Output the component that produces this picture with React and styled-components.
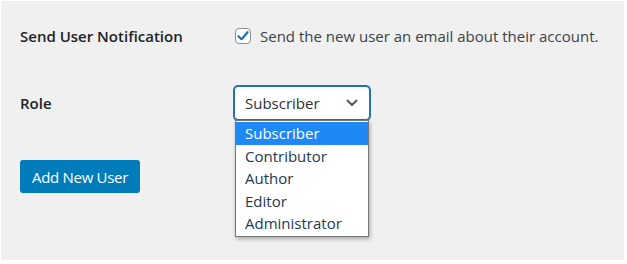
import React, { useState } from 'react';
import styled, { createGlobalStyle } from 'styled-components';

const GlobalStyle = createGlobalStyle`
  html, body {
    margin: 0;
    padding: 0;
    background: #ffffff;
  }
  body {
    font-family: "Open Sans", "Noto Sans", sans-serif;
    color: #1d2327;
  }
`;

const roles = ['Subscriber', 'Contributor', 'Author', 'Editor', 'Administrator'];

const Panel = styled.div`
  margin: 1px 0 0 1px;
  width: 623px;
  height: 259px;
  background: #f0f0f1;
  box-sizing: border-box;
  padding: 25px 0 0 19px;
`;

const FormRow = styled.div`
  display: grid;
  grid-template-columns: 214px 1fr;
  align-items: center;
  height: ${(p) => p.$height}px;
  margin-bottom: ${(p) => p.$gap || 0}px;
`;

const Label = styled.label`
  font-size: 15px;
  font-weight: 600;
  color: #1d2327;
`;

const CheckLine = styled.label`
  display: flex;
  align-items: center;
  gap: 9px;
  font-size: 15px;
  color: #3c434a;
`;

const Box = styled.span`
  width: 16px;
  height: 16px;
  box-sizing: border-box;
  border: 1px solid #8c8f94;
  border-radius: 4px;
  background: #ffffff;
  display: flex;
  align-items: center;
  justify-content: center;
  margin-left: 1px;
`;

const SelectWrap = styled.div`
  position: relative;
  width: 136px;
`;

const SelectBox = styled.div`
  height: 34px;
  box-sizing: border-box;
  border: 1px solid #2271b1;
  box-shadow: 0 0 0 1px #2271b1;
  border-radius: 4px;
  background: #ffffff;
  display: flex;
  align-items: center;
  justify-content: space-between;
  padding: 0 11px 0 10px;
  font-size: 15px;
  color: #2c3338;
`;

const Menu = styled.ul`
  position: absolute;
  top: 34px;
  left: 1px;
  width: 134px;
  margin: 0;
  padding: 1px 0 1px;
  list-style: none;
  background: #ffffff;
  border: 1px solid #767676;
  box-sizing: border-box;
  box-shadow: 1px 2px 4px rgba(0, 0, 0, 0.3);
`;

const Option = styled.li`
  height: 22.6px;
  line-height: 22.6px;
  padding-left: 9px;
  font-size: 15px;
  color: ${(p) => (p.$active ? '#ffffff' : '#1c3a52')};
  background: ${(p) => (p.$active ? '#1e88f4' : 'transparent')};
`;

const Button = styled.button`
  margin-top: 40px;
  height: 33px;
  padding: 0 12px;
  border: none;
  border-radius: 3px;
  background: #007cba;
  color: #ffffff;
  font-family: inherit;
  font-size: 15px;
  letter-spacing: -0.3px;
  cursor: pointer;
`;

const Check = () => (
  <svg width="14" height="14" viewBox="0 0 14 14">
    <path d="M2.5 7.2 L5.6 10.2 L11.6 3.2" fill="none" stroke="#2271b1" strokeWidth="2.2" strokeLinecap="round" strokeLinejoin="round" />
  </svg>
);

const Chevron = () => (
  <svg width="12" height="8" viewBox="0 0 12 8">
    <path d="M1.5 1.5 L6 6 L10.5 1.5" fill="none" stroke="#50575e" strokeWidth="2" strokeLinecap="round" strokeLinejoin="round" />
  </svg>
);

export default function App() {
  const [role] = useState('Subscriber');
  return (
    <>
      <GlobalStyle />
      <Panel>
        <FormRow $height={20} $gap={40}>
          <Label>Send User Notification</Label>
          <CheckLine>
            <Box><Check /></Box>
            Send the new user an email about their account.
          </CheckLine>
        </FormRow>
        <FormRow $height={34}>
          <Label>Role</Label>
          <SelectWrap>
            <SelectBox>
              {role}
              <Chevron />
            </SelectBox>
            <Menu>
              {roles.map((r) => (
                <Option key={r} $active={r === role}>{r}</Option>
              ))}
            </Menu>
          </SelectWrap>
        </FormRow>
        <Button>Add New User</Button>
      </Panel>
    </>
  );
}
